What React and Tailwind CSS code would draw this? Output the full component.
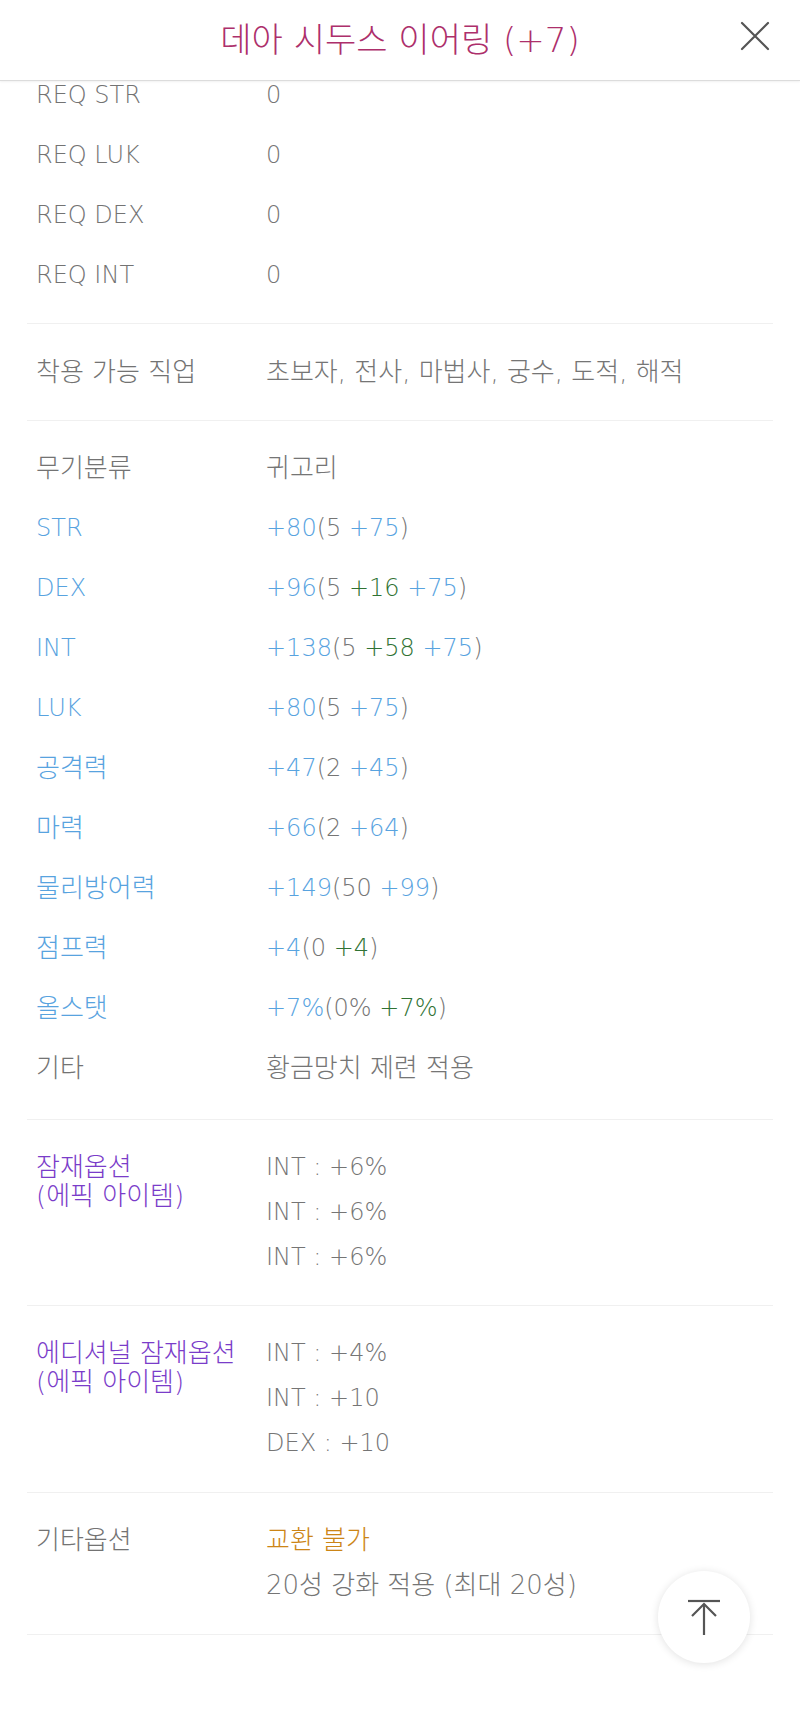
import React from 'react';

const FONT = { fontFamily: '"DejaVu Sans", "Noto Sans CJK KR", sans-serif' };

// Hangul renders a bit small next to DejaVu, so bump it
const ko = (s) => (/[가-힣]/.test(s) ? 'text-[26px]' : '');

// value segments: [text, tone]
const tone = {
  blue: 'text-[#58a3df]',
  gray: 'text-[#757575]',
  green: 'text-[#2f7233]',
};

const reqRows = [
  ['REQ STR', '0'],
  ['REQ LUK', '0'],
  ['REQ DEX', '0'],
  ['REQ INT', '0'],
];

const statRows = [
  { label: '무기분류', plain: true, value: [['귀고리', 'gray']] },
  { label: 'STR', value: [['+80', 'blue'], ['(5 ', 'gray'], ['+75', 'blue'], [')', 'gray']] },
  { label: 'DEX', value: [['+96', 'blue'], ['(5 ', 'gray'], ['+16 ', 'green'], ['+75', 'blue'], [')', 'gray']] },
  { label: 'INT', value: [['+138', 'blue'], ['(5 ', 'gray'], ['+58 ', 'green'], ['+75', 'blue'], [')', 'gray']] },
  { label: 'LUK', value: [['+80', 'blue'], ['(5 ', 'gray'], ['+75', 'blue'], [')', 'gray']] },
  { label: '공격력', value: [['+47', 'blue'], ['(2 ', 'gray'], ['+45', 'blue'], [')', 'gray']] },
  { label: '마력', value: [['+66', 'blue'], ['(2 ', 'gray'], ['+64', 'blue'], [')', 'gray']] },
  { label: '물리방어력', value: [['+149', 'blue'], ['(50 ', 'gray'], ['+99', 'blue'], [')', 'gray']] },
  { label: '점프력', value: [['+4', 'blue'], ['(0 ', 'gray'], ['+4', 'green'], [')', 'gray']] },
  { label: '올스탯', value: [['+7%', 'blue'], ['(0% ', 'gray'], ['+7%', 'green'], [')', 'gray']] },
  { label: '기타', plain: true, value: [['황금망치 제련 적용', 'gray']] },
];

function Row({ label, labelClass = 'text-[#737373]', children }) {
  return (
    <div className="flex h-[60px] items-center pl-[9px]">
      <div className={`w-[230px] shrink-0 ${labelClass} ${ko(label)}`}>{label}</div>
      <div className="text-[#757575]">{children}</div>
    </div>
  );
}

function Section({ children, className = '' }) {
  return <div className={`border-b border-[#f0f0f0] ${className}`}>{children}</div>;
}

function OptionBlock({ lines, values, labelClass = 'text-[#7a3cc9]', firstClass }) {
  return (
    <div className="flex items-start pl-[9px]">
      <div className={`w-[230px] shrink-0 pt-[8px] text-[26px] leading-[29px] ${labelClass}`}>
        {lines.map((l) => (
          <div key={l}>{l}</div>
        ))}
      </div>
      <div className="leading-[45px] text-[#757575]">
        {values.map((v, i) => (
          <div key={i} className={`${ko(v)} ${i === 0 && firstClass ? firstClass : ''}`}>
            {v}
          </div>
        ))}
      </div>
    </div>
  );
}

export default function App() {
  return (
    <div className="relative min-h-[1712px] bg-white text-[24px] font-light" style={FONT}>
      {/* Header */}
      <div className="sticky top-0 z-10 flex h-[81px] items-center justify-center border-b border-[#dcdcdc] bg-white shadow-[0_1px_2px_rgba(0,0,0,0.06)]">
        <h1 className="text-[34px] font-light text-[#ad2f6b]">데아 시두스 이어링 (+7)</h1>
        <button className="absolute right-[29px] top-[20px] p-0">
          <svg width="32" height="32" viewBox="0 0 32 32" fill="none" stroke="#555" strokeWidth="2.2" strokeLinecap="round">
            <path d="M3 3 L29 29 M29 3 L3 29" />
          </svg>
        </button>
      </div>

      <div className="relative -mt-[16px] px-[27px]">
        {/* Requirements */}
        <Section className="pb-[18px]">
          {reqRows.map(([l, v]) => (
            <Row key={l} label={l}>
              {v}
            </Row>
          ))}
        </Section>

        {/* Jobs */}
        <Section className="py-[18px]">
          <Row label="착용 가능 직업">
            <span className="text-[26px]">초보자, 전사, 마법사, 궁수, 도적, 해적</span>
          </Row>
        </Section>

        {/* Stats */}
        <Section className="pb-[21px] pt-[17px]">
          {statRows.map((r) => (
            <Row key={r.label} label={r.label} labelClass={r.plain ? 'text-[#737373]' : 'text-[#58a3df]'}>
              {r.value.map(([t, c], i) => (
                <span key={i} className={`${tone[c]} ${ko(t)}`}>
                  {t}
                </span>
              ))}
            </Row>
          ))}
        </Section>

        {/* Potential */}
        <Section className="pb-[25px] pt-[25px]">
          <OptionBlock lines={['잠재옵션', '(에픽 아이템)']} values={['INT : +6%', 'INT : +6%', 'INT : +6%']} />
        </Section>

        {/* Additional potential */}
        <Section className="pb-[26px] pt-[25px]">
          <OptionBlock lines={['에디셔널 잠재옵션', '(에픽 아이템)']} values={['INT : +4%', 'INT : +10', 'DEX : +10']} />
        </Section>

        {/* Etc options */}
        <Section className="pb-[26px] pt-[25px]">
          <OptionBlock
            lines={['기타옵션']}
            labelClass="text-[#737373]"
            firstClass="text-[#cc8516]"
            values={['교환 불가', '20성 강화 적용 (최대 20성)']}
          />
        </Section>
      </div>

      {/* Scroll to top */}
      <button className="fixed bottom-[49px] right-[50px] flex h-[92px] w-[92px] items-center justify-center rounded-full bg-white shadow-[0_1px_8px_rgba(0,0,0,0.12)]">
        <svg width="36" height="40" viewBox="0 0 36 40" fill="none" stroke="#555" strokeWidth="2.2">
          <path d="M2 4 H34" />
          <path d="M18 7 V38" />
          <path d="M6 19 L18 7 L30 19" />
        </svg>
      </button>
    </div>
  );
}
